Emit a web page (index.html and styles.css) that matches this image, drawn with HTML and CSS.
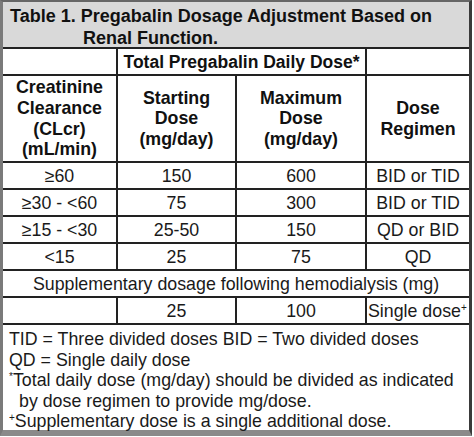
FILE: index.html
```html
<!DOCTYPE html>
<html>
<head>
<meta charset="utf-8">
<link rel="stylesheet" href="styles.css">
</head>
<body>
<div class="frame">
  <div class="title">
    <div class="title-line"><span class="label">Table 1.</span> Pregabalin Dosage Adjustment Based on</div>
    <div class="title-line indent">Renal Function.</div>
  </div>
  <table class="dose">
    <colgroup>
      <col class="c1"><col class="c2"><col class="c3"><col class="c4">
    </colgroup>
    <tr class="group-row">
      <td></td>
      <th colspan="2">Total Pregabalin Daily Dose*</th>
      <td></td>
    </tr>
    <tr class="head-row">
      <th>Creatinine<br>Clearance<br>(CLcr)<br>(mL/min)</th>
      <th>Starting<br>Dose<br>(mg/day)</th>
      <th>Maximum<br>Dose<br>(mg/day)</th>
      <th>Dose<br>Regimen</th>
    </tr>
    <tr class="row"><td>&ge;60</td><td>150</td><td>600</td><td>BID or TID</td></tr>
    <tr class="row"><td>&ge;30 - &lt;60</td><td>75</td><td>300</td><td>BID or TID</td></tr>
    <tr class="row"><td>&ge;15 - &lt;30</td><td>25-50</td><td>150</td><td>QD or BID</td></tr>
    <tr class="row"><td>&lt;15</td><td>25</td><td>75</td><td>QD</td></tr>
    <tr class="row"><td colspan="4">Supplementary dosage following hemodialysis (mg)</td></tr>
    <tr class="row last"><td></td><td>25</td><td>100</td><td class="single">Single dose<sup>+</sup></td></tr>
  </table>
  <div class="notes">
    <p>TID = Three divided doses BID = Two divided doses</p>
    <p>QD = Single daily dose</p>
    <p><sup>*</sup>Total daily dose (mg/day) should be divided as indicated</p>
    <p class="cont">by dose regimen to provide mg/dose.</p>
    <p><sup>+</sup>Supplementary dose is a single additional dose.</p>
  </div>
</div>
</body>
</html>
```

FILE: styles.css
```css
html, body {
  margin: 0;
  padding: 0;
  background: #ffffff;
}

body {
  font-family: "Liberation Sans", Arial, sans-serif;
  color: #1a1a1a;
  width: 474px;
  height: 437px;
  overflow: hidden;
}

.frame {
  width: 466px;
  border-left: 3px solid #7a7a7a;
  border-right: 3px solid #3a3a3a;
  border-top: 2px solid #666666;
  border-bottom: 6px solid #8a8a8a;
  margin-right: 2px;
}

.title {
  background: #d9d9d9;
  padding: 4px 0 0 7px;
  box-sizing: border-box;
  font-weight: bold;
  font-size: 18px;
  line-height: 21.5px;
  color: #111;
  border-bottom: 2px solid #222;
  height: 47px;
}

.title-line.indent {
  padding-left: 73px;
}

.dose {
  width: 100%;
  border-collapse: collapse;
  table-layout: fixed;
  font-size: 17.8px;
}

.dose col.c1 { width: 114px; }
.dose col.c2 { width: 119px; }
.dose col.c3 { width: 130px; }
.dose col.c4 { width: 103px; }

.dose td, .dose th {
  border: 2px solid #222;
  text-align: center;
  padding: 0;
  vertical-align: middle;
}

.dose tr:first-child td, .dose tr:first-child th { border-top: none; }
.dose td:first-child, .dose th:first-child { border-left: none; }
.dose td:last-child, .dose th:last-child { border-right: none; }

.dose th {
  font-weight: bold;
  color: #111;
}

.group-row th, .group-row td {
  height: 25px;
  font-size: 17.5px;
  line-height: 20px;
}

.head-row th {
  height: 85px;
  font-size: 17.8px;
  line-height: 20.6px;
}

.row td {
  height: 25px;
  line-height: 20px;
}

.row td.single {
  text-align: left;
  white-space: nowrap;
  overflow: visible;
  padding-left: 1px;
}

sup {
  font-size: 10px;
  vertical-align: 6px;
  line-height: 0;
}

.notes {
  padding: 4px 0 0 6px;
  height: 101px;
  font-size: 17.8px;
  line-height: 20.6px;
}

.notes p {
  margin: 0;
  white-space: nowrap;
}

.notes p.cont {
  padding-left: 10px;
}
```
